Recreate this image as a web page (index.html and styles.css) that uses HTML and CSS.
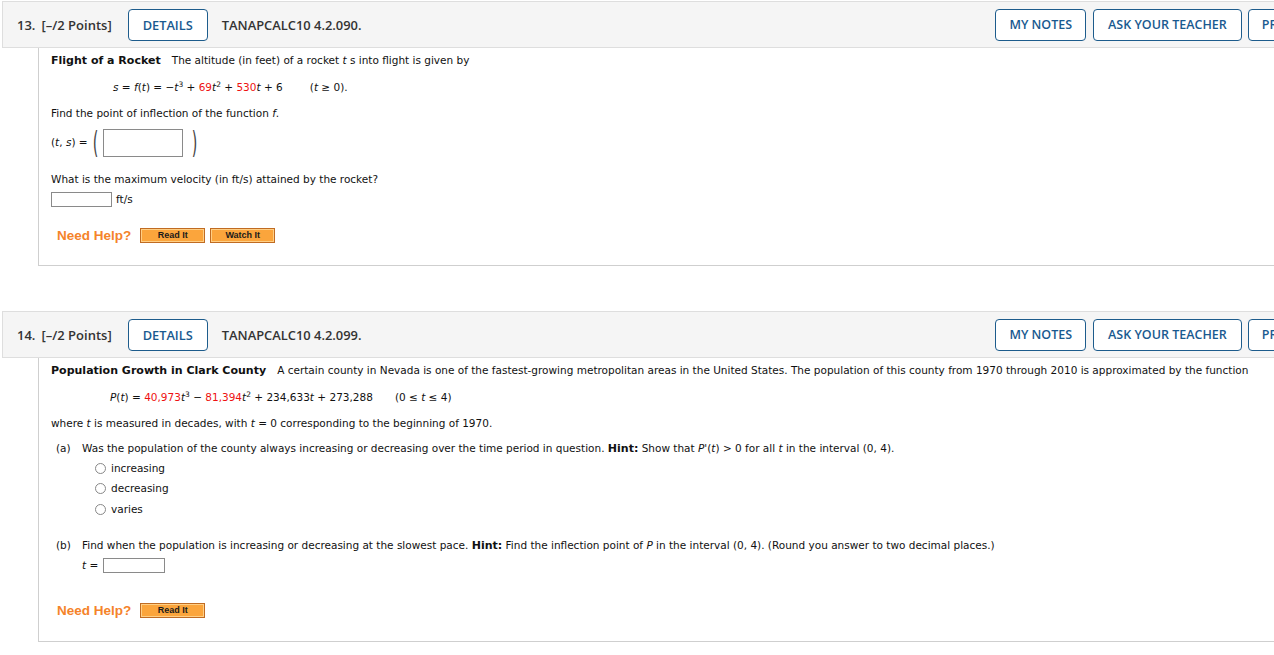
FILE: index.html
```html
<!DOCTYPE html>
<html>
<head>
<meta charset="utf-8">
<link rel="stylesheet" href="styles.css">
</head>
<body>
<div class="page">
  <section class="question q13">
    <div class="qhead">
      <div class="qleft">
        <span class="qnum">13.</span>
        <span class="pts">[–/2 Points]</span>
        <span class="hbtn">DETAILS</span>
        <span class="code">TANAPCALC10 4.2.090.</span>
      </div>
      <div class="qright">
        <span class="hbtn">MY NOTES</span>
        <span class="hbtn ask">ASK YOUR TEACHER</span>
        <span class="hbtn">PRACTICE ANOTHER</span>
      </div>
    </div>
    <div class="qbody">
      <p class="intro"><b>Flight of a Rocket</b><span class="sp"></span>The altitude (in feet) of a rocket <i>t</i> s into flight is given by</p>
      <p class="eq eq13"><i>s</i> = <i>f</i>(<i>t</i>) = −<i>t</i><sup>3</sup> + <span class="red">69</span><i>t</i><sup>2</sup> + <span class="red">530</span><i>t</i> + 6<span class="cond">(<i>t</i> ≥ 0).</span></p>
      <p class="line find">Find the point of inflection of the function <i>f</i>.</p>
      <div class="pair">
        <span>(<i>t</i>, <i>s</i>) =</span>
        <span class="paren">(</span>
        <span class="bigbox"></span>
        <span class="paren">)</span>
      </div>
      <p class="line what">What is the maximum velocity (in ft/s) attained by the rocket?</p>
      <div class="ansrow"><span class="box w60"></span><span>ft/s</span></div>
      <div class="help help13">
        <span class="needhelp">Need Help?</span>
        <span class="obtn">Read It</span>
        <span class="obtn">Watch It</span>
      </div>
    </div>
  </section>

  <section class="question q14">
    <div class="qhead">
      <div class="qleft">
        <span class="qnum">14.</span>
        <span class="pts">[–/2 Points]</span>
        <span class="hbtn">DETAILS</span>
        <span class="code">TANAPCALC10 4.2.099.</span>
      </div>
      <div class="qright">
        <span class="hbtn">MY NOTES</span>
        <span class="hbtn ask">ASK YOUR TEACHER</span>
        <span class="hbtn">PRACTICE ANOTHER</span>
      </div>
    </div>
    <div class="qbody">
      <p class="intro"><b>Population Growth in Clark County</b><span class="sp"></span>A certain county in Nevada is one of the fastest-growing metropolitan areas in the United States. The population of this county from 1970 through 2010 is approximated by the function</p>
      <p class="eq eq14"><i>P</i>(<i>t</i>) = <span class="red">40,973</span><i>t</i><sup>3</sup> − <span class="red">81,394</span><i>t</i><sup>2</sup> + 234,633<i>t</i> + 273,288<span class="cond2">(0 ≤ <i>t</i> ≤ 4)</span></p>
      <p class="line where">where <i>t</i> is measured in decades, with <i>t</i> = 0 corresponding to the beginning of 1970.</p>
      <div class="part parta">
        <span class="plabel">(a)</span>
        <div class="pcontent">
          <p class="line">Was the population of the county always increasing or decreasing over the time period in question. <b>Hint:</b> Show that <i>P</i>'(<i>t</i>) &gt; 0 for all <i>t</i> in the interval (0, 4).</p>
          <ul class="radios">
            <li><span class="radio"></span>increasing</li>
            <li><span class="radio"></span>decreasing</li>
            <li><span class="radio"></span>varies</li>
          </ul>
        </div>
      </div>
      <div class="part partb">
        <span class="plabel">(b)</span>
        <div class="pcontent">
          <p class="line">Find when the population is increasing or decreasing at the slowest pace. <b>Hint:</b> Find the inflection point of <i>P</i> in the interval (0, 4). (Round you answer to two decimal places.)</p>
          <div class="trow"><span><i>t</i> =</span><span class="box w61"></span></div>
        </div>
      </div>
      <div class="help help14">
        <span class="needhelp">Need Help?</span>
        <span class="obtn">Read It</span>
      </div>
    </div>
  </section>
</div>
</body>
</html>
```

FILE: styles.css
```css
html, body {
  margin: 0;
  padding: 0;
  background: #fff;
  overflow: hidden;
}
.page {
  padding: 1px 0 0 2px;
  width: 1395px;
}
.question {
  display: flex;
  flex-direction: column;
}
.q14 {
  margin-top: 45px;
}
.qhead {
  display: flex;
  align-items: center;
  justify-content: space-between;
  height: 47px;
  box-sizing: border-box;
  padding: 0 0 0 14px;
  background: #f5f5f5;
  border: 1px solid #dedede;
  font-family: "Open Sans", "Noto Sans", sans-serif;
  font-size: 13px;
  font-weight: 600;
  color: #333;
}
.qleft, .qright {
  display: flex;
  align-items: center;
}
.qright {
  gap: 6px;
}
.qnum {
  margin-right: 6px;
}
.pts {
  margin-right: 16px;
}
.code {
  margin-left: 14px;
  font-size: 12.9px;
}
.hbtn {
  display: inline-flex;
  align-items: center;
  justify-content: center;
  height: 32px;
  box-sizing: border-box;
  padding: 0 13px;
  border: 1px solid #1d5c8c;
  border-radius: 4px;
  background: #fff;
  color: #195a90;
  font-weight: 600;
  font-size: 12.5px;
}
.hbtn.ask {
  padding: 0 14px;
  margin-left: 1px;
}
.qleft .hbtn {
  padding: 0 14px;
  font-size: 12.8px;
}
.qbody {
  margin-left: 36px;
  border-left: 1px solid #cfcfcf;
  border-bottom: 1px solid #cfcfcf;
  padding: 6px 12px 22px 12px;
  font-family: "DejaVu Sans", Verdana, sans-serif;
  font-size: 10.5px;
  line-height: 13px;
  color: #111;
}
.qbody p {
  margin: 0;
}
.qbody b {
  font-weight: bold;
  font-size: 1.05em;
}
.sp {
  display: inline-block;
  width: 11px;
}
.red {
  color: #ee1111;
}
sup {
  font-size: 7.5px;
  line-height: 0;
  vertical-align: 4px;
}
.eq {
  margin-top: 14px !important;
}
.eq13 {
  padding-left: 62px;
}
.eq14 {
  padding-left: 59px;
}
.cond {
  margin-left: 27px;
}
.cond2 {
  margin-left: 22px;
}
.find, .where {
  margin-top: 13px !important;
}
.pair {
  display: flex;
  align-items: center;
  height: 31px;
  margin-top: 7px;
}
.paren {
  display: inline-block;
  font-size: 13px;
  transform: scale(1.1, 2.35);
  color: #444;
  margin: 0 5px 0 5px;
}
.pair .paren:last-child {
  margin: 0 0 0 9px;
}
.bigbox {
  display: inline-block;
  width: 80px;
  height: 28px;
  box-sizing: border-box;
  border: 1px solid #8a8a8a;
  background: #fff;
}
.what {
  margin-top: 15px !important;
}
.ansrow {
  display: flex;
  align-items: center;
  gap: 4px;
  margin-top: 6px;
  height: 15px;
}
.box {
  display: inline-block;
  height: 15px;
  box-sizing: border-box;
  border: 1px solid #8a8a8a;
  background: #fff;
}
.w60 { width: 61px; }
.w61 { width: 62px; }
.help {
  display: flex;
  align-items: center;
  gap: 5px;
  padding-left: 6px;
  height: 16px;
}
.help13 {
  margin-top: 20px;
}
.help14 {
  margin-top: 30px;
}
.needhelp {
  font-family: "Liberation Sans", Arial, sans-serif;
  font-size: 13.5px;
  font-weight: bold;
  color: #f5832a;
  margin-right: 4px;
}
.obtn {
  display: inline-flex;
  align-items: center;
  justify-content: center;
  width: 65px;
  height: 15px;
  box-sizing: border-box;
  border: 1px solid #c06b22;
  box-shadow: inset 0 0 0 1px #ffcf85;
  background: #fba53c;
  font-family: "Liberation Sans", Arial, sans-serif;
  font-size: 9px;
  font-weight: bold;
  color: #1a1a1a;
}
.part {
  display: flex;
  padding-left: 5px;
}
.parta {
  margin-top: 12px;
}
.partb {
  margin-top: 19px;
}
.plabel {
  width: 26px;
  flex: none;
}
.radios {
  list-style: none;
  margin: 3px 0 0 13px;
  padding: 0;
}
.radios li {
  display: flex;
  align-items: center;
  height: 20.5px;
}
.radio {
  display: inline-block;
  width: 11px;
  height: 11px;
  box-sizing: border-box;
  border: 1px solid #888;
  border-radius: 50%;
  background: #fff;
  margin-right: 5px;
}
.trow {
  display: flex;
  align-items: center;
  gap: 5px;
  margin-top: 6px;
  height: 15px;
}
```
